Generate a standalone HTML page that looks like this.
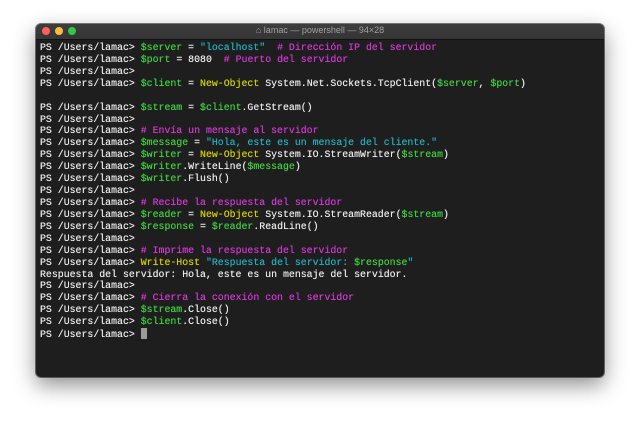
<!DOCTYPE html>
<html><head><meta charset="utf-8"><style>
html,body{margin:0;padding:0;width:640px;height:427px;background:#fff;overflow:hidden}
.win{position:absolute;left:36px;top:24px;width:568px;height:353px;background:#1e1e1e;border-radius:5px;box-shadow:0 8px 22px rgba(0,0,0,.45),0 0 0 1px rgba(0,0,0,.5);overflow:hidden}
.tb{height:15px;background:linear-gradient(#3d3d3d,#353535);border-bottom:1px solid #111;position:relative}
.d{position:absolute;top:3px;width:8px;height:8px;border-radius:50%}
.tt{position:absolute;left:0;right:0;top:1px;text-align:center;font:9px "Liberation Sans",sans-serif;color:#a0a0a0}
pre{margin:0;position:absolute;left:4px;top:18px;font:9.9px/11.92px "Liberation Mono",monospace;color:#ececec;white-space:pre;text-shadow:0 0 0.4px currentColor}
.g{color:#40d040}.y{color:#d4d000}.c{color:#20b0c0}.m{color:#d238d2}
.cur{display:inline-block;width:6px;height:11px;background:#9a9a9a;vertical-align:-2px}
</style></head><body>
<div class="win">
<div class="tb"><span class="d" style="left:6px;background:#fc605c"></span><span class="d" style="left:19px;background:#fdbc40"></span><span class="d" style="left:32px;background:#34c84a"></span><div class="tt">⌂ lamac — powershell — 94×28</div></div>
<pre>PS /Users/lamac&gt; <span class="g">$server</span> = <span class="c">"localhost"</span>  <span class="m"># Dirección IP del servidor</span>
PS /Users/lamac&gt; <span class="g">$port</span> = 8080  <span class="m"># Puerto del servidor</span>
PS /Users/lamac&gt;
PS /Users/lamac&gt; <span class="g">$client</span> = <span class="y">New-Object</span> System.Net.Sockets.TcpClient(<span class="g">$server</span>, <span class="g">$port</span>)

PS /Users/lamac&gt; <span class="g">$stream</span> = <span class="g">$client</span>.GetStream()
PS /Users/lamac&gt;
PS /Users/lamac&gt; <span class="m"># Envía un mensaje al servidor</span>
PS /Users/lamac&gt; <span class="g">$message</span> = <span class="c">"Hola, este es un mensaje del cliente."</span>
PS /Users/lamac&gt; <span class="g">$writer</span> = <span class="y">New-Object</span> System.IO.StreamWriter(<span class="g">$stream</span>)
PS /Users/lamac&gt; <span class="g">$writer</span>.WriteLine(<span class="g">$message</span>)
PS /Users/lamac&gt; <span class="g">$writer</span>.Flush()
PS /Users/lamac&gt;
PS /Users/lamac&gt; <span class="m"># Recibe la respuesta del servidor</span>
PS /Users/lamac&gt; <span class="g">$reader</span> = <span class="y">New-Object</span> System.IO.StreamReader(<span class="g">$stream</span>)
PS /Users/lamac&gt; <span class="g">$response</span> = <span class="g">$reader</span>.ReadLine()
PS /Users/lamac&gt;
PS /Users/lamac&gt; <span class="m"># Imprime la respuesta del servidor</span>
PS /Users/lamac&gt; <span class="y">Write-Host</span> <span class="c">"Respuesta del servidor: </span><span class="g">$response</span><span class="c">"</span>
Respuesta del servidor: Hola, este es un mensaje del servidor.
PS /Users/lamac&gt;
PS /Users/lamac&gt; <span class="m"># Cierra la conexión con el servidor</span>
PS /Users/lamac&gt; <span class="g">$stream</span>.Close()
PS /Users/lamac&gt; <span class="g">$client</span>.Close()
PS /Users/lamac&gt; <span class="cur"></span></pre>
</div>
</body></html>
